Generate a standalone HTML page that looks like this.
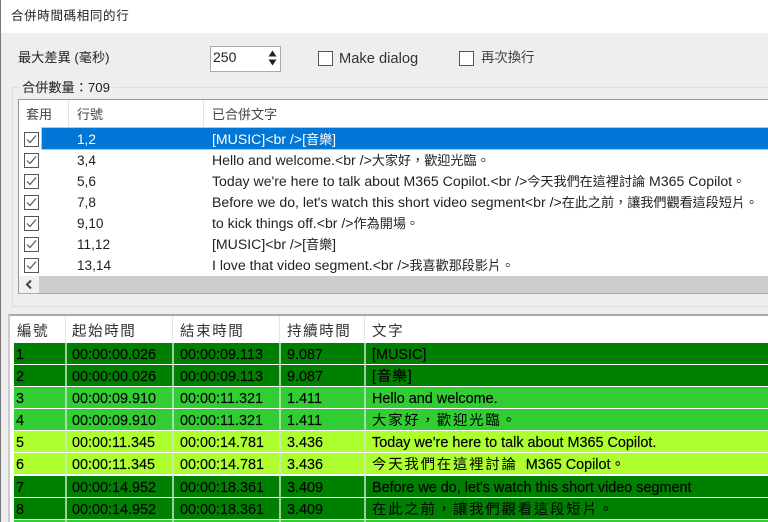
<!DOCTYPE html>
<html lang="zh-Hant"><head><meta charset="utf-8">
<style>
html,body{margin:0;padding:0;background:#eee}
#r{position:relative;width:768px;height:522px;overflow:hidden;background:#eee;font-family:"Liberation Sans","Noto Sans CJK TC",sans-serif;font-size:13.5px;color:#222;filter:blur(.35px)}
.a,.t{position:absolute}
.t{white-space:nowrap;line-height:20px;height:20px}
.l{font-size:14.1px}
.l i{font-style:normal;font-size:13.1px}
.n{font-size:13.6px}
.cb{position:absolute;width:13px;height:13px;border:1px solid #555;background:#fff}
.cb svg{position:absolute;left:0;top:0}
.row{position:absolute;left:14px;width:754px;height:21px}
.cell{position:absolute;top:0;height:100%;line-height:25px;white-space:nowrap;color:#000;font-size:14.4px;-webkit-text-stroke:.15px #000}
.z{letter-spacing:1.8px;-webkit-text-stroke:0}
.h{font-size:14.5px;letter-spacing:1.6px;color:#333}
</style></head><body><div id="r">
<div class="a" style="left:0;top:0;width:768px;height:33px;background:#fff"></div>
<div class="a" style="left:0;top:0;width:1px;height:522px;background:#777"></div>
<div class="t" style="left:11px;top:6px;font-size:12.5px;letter-spacing:.65px">合併時間碼相同的行</div>

<div class="t" style="left:18px;top:48px;font-size:13.2px">最大差異 (毫秒)</div>
<div class="a" style="left:210px;top:46px;width:69px;height:24px;border:1px solid #aaa;background:#fff"></div>
<div class="t" style="left:213px;top:47px;font-size:14px">250</div>
<svg class="a" style="left:268px;top:49px" width="10" height="18"><path d="M.5 7.5L4.5 1.5L8.5 7.5ZM.5 10.5L4.5 16.5L8.5 10.5Z" fill="#222"/></svg>
<div class="cb" style="left:318px;top:51px;border-color:#555"></div>
<div class="t" style="left:339px;top:49px;font-size:14.7px;color:#333">Make dialog</div>
<div class="cb" style="left:459px;top:51px"></div>
<div class="t" style="left:481px;top:48px;letter-spacing:-.2px;color:#444">再次換行</div>

<div class="a" style="left:12px;top:87px;width:760px;height:218px;border:1px solid #ddd"></div>
<div class="t" style="left:19px;top:78px;padding:0 3px;background:#eee;font-size:13.2px">合併數量：709</div>

<div class="a" style="left:18px;top:99px;width:750px;height:195px;background:#fff;border-top:1px solid #999;border-left:1px solid #999;border-bottom:2px solid #aaa;box-sizing:border-box"></div>
<div class="a" style="left:68px;top:100px;width:1px;height:27px;background:#e5e5e5"></div>
<div class="a" style="left:203px;top:100px;width:1px;height:27px;background:#e5e5e5"></div>
<div class="t" style="left:26px;top:105px;font-size:13px;color:#444">套用</div>
<div class="t" style="left:77px;top:105px;font-size:13px;color:#444">行號</div>
<div class="t" style="left:212px;top:105px;font-size:13px;color:#444">已合併文字</div>

<div class="a" style="left:42px;top:128px;width:726px;height:21px;background:#0076d6;box-shadow:0 0 0 1px #9cd0f5"></div>
<div class="t n" style="left:77px;top:130px;color:#fff">1,2</div>
<div class="t l" style="left:212px;top:129px;color:#fff">[MUSIC]&lt;br /&gt;[<i>音樂</i>]</div>

<div class="t n" style="left:77px;top:151px">3,4</div>
<div class="t l" style="left:212px;top:150px">Hello and welcome.&lt;br /&gt;<i>大家好，歡迎光臨。</i></div>
<div class="t n" style="left:77px;top:172px">5,6</div>
<div class="t l" style="left:212px;top:171px">Today we're here to talk about M365 Copilot.&lt;br /&gt;<i>今天我們在這裡討論</i> M365 Copilot<i>。</i></div>
<div class="t n" style="left:77px;top:193px">7,8</div>
<div class="t l" style="left:212px;top:192px">Before we do, let's watch this short video segment&lt;br /&gt;<i>在此之前，讓我們觀看這段短片。</i></div>
<div class="t n" style="left:77px;top:214px">9,10</div>
<div class="t l" style="left:212px;top:213px">to kick things off.&lt;br /&gt;<i>作為開場。</i></div>
<div class="t n" style="left:77px;top:235px">11,12</div>
<div class="t l" style="left:212px;top:234px">[MUSIC]&lt;br /&gt;[<i>音樂</i>]</div>
<div class="t n" style="left:77px;top:256px">13,14</div>
<div class="t l" style="left:212px;top:255px">I love that video segment.&lt;br /&gt;<i>我喜歡那段影片。</i></div>

<div class="cb" style="left:24px;top:132px"><svg width="13" height="13"><path d="M2 6.5L5 9.5L11 2.5" fill="none" stroke="#555" stroke-width="1.2"/></svg></div>
<div class="cb" style="left:24px;top:153px"><svg width="13" height="13"><path d="M2 6.5L5 9.5L11 2.5" fill="none" stroke="#555" stroke-width="1.2"/></svg></div>
<div class="cb" style="left:24px;top:174px"><svg width="13" height="13"><path d="M2 6.5L5 9.5L11 2.5" fill="none" stroke="#555" stroke-width="1.2"/></svg></div>
<div class="cb" style="left:24px;top:195px"><svg width="13" height="13"><path d="M2 6.5L5 9.5L11 2.5" fill="none" stroke="#555" stroke-width="1.2"/></svg></div>
<div class="cb" style="left:24px;top:216px"><svg width="13" height="13"><path d="M2 6.5L5 9.5L11 2.5" fill="none" stroke="#555" stroke-width="1.2"/></svg></div>
<div class="cb" style="left:24px;top:237px"><svg width="13" height="13"><path d="M2 6.5L5 9.5L11 2.5" fill="none" stroke="#555" stroke-width="1.2"/></svg></div>
<div class="cb" style="left:24px;top:258px"><svg width="13" height="13"><path d="M2 6.5L5 9.5L11 2.5" fill="none" stroke="#555" stroke-width="1.2"/></svg></div>

<div class="a" style="left:19px;top:276px;width:749px;height:17px;background:#f0f0f0"></div>
<div class="a" style="left:39px;top:276px;width:729px;height:17px;background:#cdcdcd"></div>
<svg class="a" style="left:24px;top:279px" width="10" height="11"><path d="M7 1.5L3 5.5L7 9.5" fill="none" stroke="#444" stroke-width="2"/></svg>

<div class="a" style="left:8px;top:314px;width:760px;height:208px;background:#fff;border-top:2px solid #aaa;border-left:2px solid #ccc;box-sizing:border-box"></div>
<div class="a" style="left:65px;top:316px;width:1px;height:27px;background:#e5e5e5"></div>
<div class="a" style="left:172px;top:316px;width:1px;height:27px;background:#e5e5e5"></div>
<div class="a" style="left:279px;top:316px;width:1px;height:27px;background:#e5e5e5"></div>
<div class="a" style="left:364px;top:316px;width:1px;height:27px;background:#e5e5e5"></div>
<div class="t h" style="left:17px;top:322px">編號</div>
<div class="t h" style="left:72px;top:322px">起始時間</div>
<div class="t h" style="left:180px;top:322px">結束時間</div>
<div class="t h" style="left:287px;top:322px">持續時間</div>
<div class="t h" style="left:372px;top:322px">文字</div>

<div class="row" style="top:343px;background:#008000"><span class="cell" style="left:2px">1</span><span class="cell" style="left:58px">00:00:00.026</span><span class="cell" style="left:166px">00:00:09.113</span><span class="cell" style="left:273px">9.087</span><span class="cell" style="left:358px">[MUSIC]</span></div>
<div class="row" style="top:365px;background:#008000"><span class="cell" style="left:2px">2</span><span class="cell" style="left:58px">00:00:00.026</span><span class="cell" style="left:166px">00:00:09.113</span><span class="cell" style="left:273px">9.087</span><span class="cell" style="left:358px;letter-spacing:1px">[音樂]</span></div>
<div class="row" style="top:387px;background:#32cd32"><span class="cell" style="left:2px">3</span><span class="cell" style="left:58px">00:00:09.910</span><span class="cell" style="left:166px">00:00:11.321</span><span class="cell" style="left:273px">1.411</span><span class="cell" style="left:358px">Hello and welcome.</span></div>
<div class="row" style="top:409px;background:#32cd32"><span class="cell" style="left:2px">4</span><span class="cell" style="left:58px">00:00:09.910</span><span class="cell" style="left:166px">00:00:11.321</span><span class="cell" style="left:273px">1.411</span><span class="cell z" style="left:358px">大家好，歡迎光臨。</span></div>
<div class="row" style="top:431px;background:#adff2f"><span class="cell" style="left:2px">5</span><span class="cell" style="left:58px">00:00:11.345</span><span class="cell" style="left:166px">00:00:14.781</span><span class="cell" style="left:273px">3.436</span><span class="cell" style="left:358px">Today we're here to talk about M365 Copilot.</span></div>
<div class="row" style="top:453px;background:#adff2f"><span class="cell" style="left:2px">6</span><span class="cell" style="left:58px">00:00:11.345</span><span class="cell" style="left:166px">00:00:14.781</span><span class="cell" style="left:273px">3.436</span><span class="cell" style="left:358px"><span class="z">今天我們在這裡討論</span><span style="margin-left:4px"> M365 Copilot。</span></span></div>
<div class="row" style="top:476px;background:#008000"><span class="cell" style="left:2px">7</span><span class="cell" style="left:58px">00:00:14.952</span><span class="cell" style="left:166px">00:00:18.361</span><span class="cell" style="left:273px">3.409</span><span class="cell" style="left:358px">Before we do, let's watch this short video segment</span></div>
<div class="row" style="top:498px;background:#008000"><span class="cell" style="left:2px">8</span><span class="cell" style="left:58px">00:00:14.952</span><span class="cell" style="left:166px">00:00:18.361</span><span class="cell" style="left:273px">3.409</span><span class="cell z" style="left:358px">在此之前，讓我們觀看這段短片。</span></div>
<div class="row" style="top:520px;background:#32cd32"></div>

<div class="a" style="left:65px;top:343px;width:2px;height:179px;background:#cfe5cf;opacity:.75"></div>
<div class="a" style="left:172px;top:343px;width:2px;height:179px;background:#cfe5cf;opacity:.75"></div>
<div class="a" style="left:279px;top:343px;width:2px;height:179px;background:#cfe5cf;opacity:.75"></div>
<div class="a" style="left:364px;top:343px;width:2px;height:179px;background:#cfe5cf;opacity:.75"></div>
</div></body></html>
